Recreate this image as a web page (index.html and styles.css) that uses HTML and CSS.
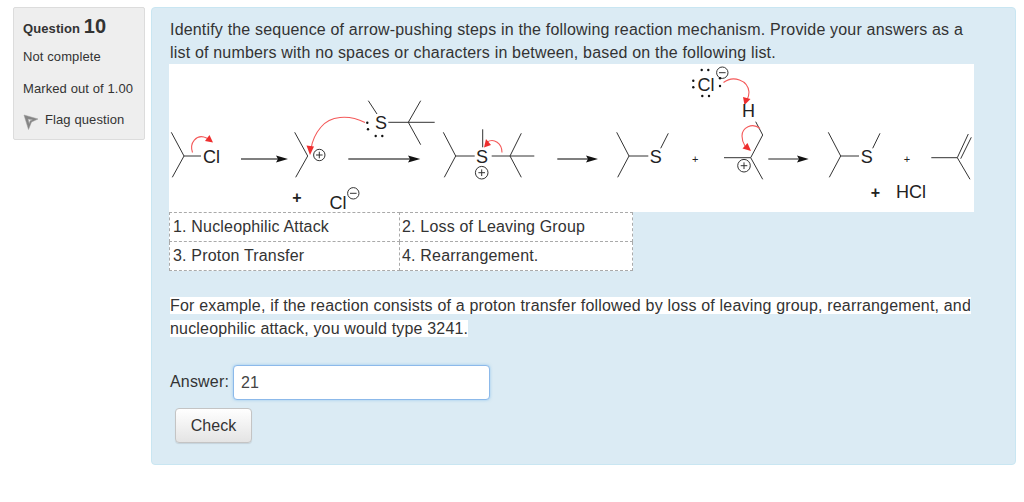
FILE: index.html
```html
<!DOCTYPE html>
<html lang="en">
<head>
<meta charset="utf-8">
<title>Question 10</title>
<link rel="stylesheet" href="styles.css">
</head>
<body>
<main class="question">
  <aside class="info">
    <h3 class="qno">Question <span class="qnum">10</span></h3>
    <div class="state">Not complete</div>
    <div class="grade">Marked out of 1.00</div>
    <div class="flag">
      <svg class="flag-icon" width="16" height="16" viewBox="0 0 16 16"><path d="M1 1 L15 5 L8.5 8 L5.5 15.5 Z M5 5 L6.2 9.5 L7.2 6.8 L9.5 5.8 Z" fill="#858585" stroke="#9a9a9a" stroke-width=".5" fill-rule="evenodd"/></svg>
      <span>Flag question</span>
    </div>
  </aside>
  <section class="content">
    <p class="prompt">Identify the sequence of arrow-pushing steps in the following reaction mechanism. Provide your answers as a list of numbers with no spaces or characters in between, based on the following list.</p>
    <svg class="scheme" width="805" height="148" viewBox="169 64 805 148">
      <g class="bond">
        <path d="M171.3 132.3L184 156L172.3 177.3M184 156H201"/>
        <path d="M294.7 132.3L307.7 156L295.7 177.3"/>
        <path d="M368.3 100.7L377 114M388.3 122.3H434.7M420.7 100.7L408.3 122.3L420.7 144.7"/>
        <path d="M443.3 132.3L455.7 156L444.3 177.3M455.7 156H474.7M482.7 129.3V147.3M491.7 156H534.3M521.3 133.3L510 156L521.3 177.3"/>
        <path d="M616.7 132.3L629 156L617.7 177.3M629 156H648.3M660.7 148.3L668.3 133.3"/>
        <path d="M755.7 121.7L762.7 135L750.7 157.7M724 157.7H750.7L762.7 179.3"/>
        <path d="M828.3 132.3L840.7 156L829.3 177.3M840.7 156H859M872.7 148.3L880 133.3"/>
        <path d="M931.3 157.7H957.3L970 179.3M957.3 157.7L968.3 134M960.7 158.7L971.3 137.3"/>
      </g>
      <g class="rarrow">
        <path d="M241 159H280"/><path class="head" d="M276 155.5L288 159L276 162.5L278 159Z"/>
        <path d="M348.3 159H412"/><path class="head" d="M408 155.5L420.3 159L408 162.5L410 159Z"/>
        <path d="M557.3 159H590"/><path class="head" d="M586 155.5L598 159L586 162.5L588 159Z"/>
        <path d="M768.3 159H800"/><path class="head" d="M797 155.5L808.7 159L797 162.5L799 159Z"/>
      </g>
      <g class="curly">
        <path d="M192.5 152.5C189 142 197 135 204 137C208 138 210 140 211 141"/>
        <path class="curly-head" d="M213 142.5L205 141L209.5 135Z"/>
        <path d="M365 122.5C348 114 330 116 321 127C315 134 312 142 311 149"/>
        <path class="curly-head" d="M310 155L306.5 145.5L314 146.5Z"/>
        <path d="M502 152.5C502 143 494 138 487 142"/>
        <path class="curly-head" d="M484 147.5L486 139L491 145Z"/>
        <path d="M723.5 82.5C733 75 748 80 749 92C749 96 748 98 747 100"/>
        <path class="curly-head" d="M744.5 105L743 97L750.5 99Z"/>
        <path d="M760 128.5C752 122 742 128 742 136C742 140 743 143 745 146"/>
        <path class="curly-head" d="M751 151L742.5 148.5L747.5 143Z"/>
      </g>
      <g class="charge">
        <circle cx="319.3" cy="155" r="5.7"/><path d="M316 155H322.6M319.3 151.7V158.3"/>
        <circle cx="481.7" cy="172.7" r="6.3"/><path d="M478.4 172.7H485M481.7 169.4V176"/>
        <circle cx="744" cy="165.7" r="6.3"/><path d="M740.7 165.7H747.3M744 162.4V169"/>
        <circle cx="353.3" cy="193.3" r="5.7"/><path d="M350 193.3H356.6"/>
        <circle cx="722.3" cy="72.7" r="5.7"/><path d="M719 72.7H725.6"/>
      </g>
      <g class="dots">
        <circle cx="367.3" cy="122.7" r="1.2"/><circle cx="368" cy="129.3" r="1.2"/><circle cx="375.7" cy="136" r="1.2"/><circle cx="382.3" cy="136" r="1.2"/>
        <circle cx="693.3" cy="80.7" r="1.2"/><circle cx="693.3" cy="87.3" r="1.2"/><circle cx="701.7" cy="70" r="1.2"/><circle cx="708.3" cy="70" r="1.2"/>
        <circle cx="702.3" cy="96" r="1.2"/><circle cx="709" cy="96" r="1.2"/><circle cx="720" cy="78.3" r="1.2"/><circle cx="720" cy="86" r="1.2"/>
      </g>
      <g class="atoms">
        <text x="203" y="162.5">Cl</text>
        <text x="375" y="128.5">S</text>
        <text x="476" y="162.5">S</text>
        <text x="649.7" y="162.5">S</text>
        <text x="860.7" y="162.5">S</text>
        <text x="697.5" y="90.5">Cl</text>
        <text x="742" y="117">H</text>
        <text x="329.5" y="209">Cl</text>
        <text x="896" y="198">HCl</text>
      </g>
      <g class="plus">
        <text x="297" y="203" class="plus-big">+</text>
        <text x="875.5" y="198" class="plus-big">+</text>
        <text x="695.3" y="163" class="plus-small">+</text>
        <text x="907" y="163" class="plus-small">+</text>
      </g>
    </svg>
    <table class="steps">
      <tr><td class="col1">1. Nucleophilic Attack</td><td class="col2">2. Loss of Leaving Group</td></tr>
      <tr><td class="col1">3. Proton Transfer</td><td class="col2">4. Rearrangement.</td></tr>
    </table>
    <p class="example"><span class="mark">For example, if the reaction consists of a proton transfer followed by loss of leaving group, rearrangement, and nucleophilic attack, you would type 3241.</span></p>
    <div class="answer">
      <label class="answer-label" for="ans">Answer:</label>
      <input class="answer-input" id="ans" type="text" value="21">
    </div>
    <button class="check" type="button">Check</button>
  </section>
</main>
</body>
</html>
```
FILE: styles.css
```css
* { box-sizing: border-box; }
html, body { margin: 0; padding: 0; }
body {
  width: 1024px;
  height: 502px;
  overflow: hidden;
  background: #fff;
  color: #333;
  font-family: "Liberation Sans", Arial, sans-serif;
}
.question {
  display: flex;
  align-items: flex-start;
  gap: 6px;
  padding: 7px 8px 0 13px;
}
.info {
  width: 132px;
  height: 133px;
  flex: none;
  padding: 8px 9px 0;
  background: #eee;
  border: 1px solid #dcdcdc;
  border-radius: 2px;
  font-size: 13px;
  letter-spacing: 0.1px;
  color: #333;
}
.qno { margin: 0; font-size: 13px; line-height: 20px; font-weight: bold; }
.qnum { font-size: 20px; }
.state { margin-top: 10px; line-height: 16px; }
.grade { margin-top: 16px; line-height: 16px; }
.flag { margin-top: 15px; display: flex; align-items: flex-start; gap: 6px; line-height: 16px; }
.flag-icon { margin-top: 2px; flex: none; }
.content {
  width: 865px;
  height: 458px;
  flex: none;
  padding: 10px 17px 0;
  background: #dbebf4;
  border: 1px solid #c9e6f2;
  border-radius: 4px;
  font-size: 16px;
  letter-spacing: 0.18px;
}
.prompt { margin: 0 20px 0 1px; line-height: 23px; }
.scheme { display: block; background: #fff; }
.bond path { fill: none; stroke: #333; stroke-width: 1; }
.rarrow path { fill: none; stroke: #555; stroke-width: 1.3; }
.rarrow .head { fill: #111; stroke: none; }
.curly path { fill: none; stroke: #f45a5a; stroke-width: 1.1; }
.curly .curly-head { fill: #ee2f2f; stroke: none; }
.charge circle { fill: none; stroke: #333; stroke-width: 1; }
.charge path { fill: none; stroke: #333; stroke-width: 1; }
.dots circle { fill: #111; }
.atoms text { font-size: 18px; letter-spacing: 0; fill: #222; }
.plus text { text-anchor: middle; fill: #222; }
.plus-big { font-size: 16px; font-weight: bold; }
.plus-small { font-size: 11px; }
.steps {
  border-collapse: collapse;
  background: #fff;
  width: 464px;
}
.steps td {
  border: 1px dashed #aaa;
  height: 29px;
  padding: 0 3px;
  line-height: 20px;
}
.steps .col1 { width: 230px; }
.steps .col2 { padding-left: 2px; }
.example { margin: 23px 0 0 1px; line-height: 23px; }
.mark { background: #fff; }
.answer { margin: 25px 0 0 1px; display: flex; align-items: center; gap: 4px; }
.answer-label { padding-bottom: 2px; }
.answer-input {
  width: 257px;
  height: 35px;
  padding: 0 7px;
  border: 1px solid #8cb9ea;
  border-radius: 4px;
  background: #fff;
  box-shadow: 0 0 3px rgba(82,168,236,.5);
  font: inherit;
  color: #444;
}
.check {
  display: block;
  margin: 8px 0 0 6px;
  width: 77px;
  height: 35px;
  padding: 0;
  border: 1px solid #c4c4c4;
  border-radius: 4px;
  background: linear-gradient(#fff, #e4e4e4);
  box-shadow: 0 1px 1px rgba(0,0,0,.1);
  font: inherit;
  color: #333;
}
```
